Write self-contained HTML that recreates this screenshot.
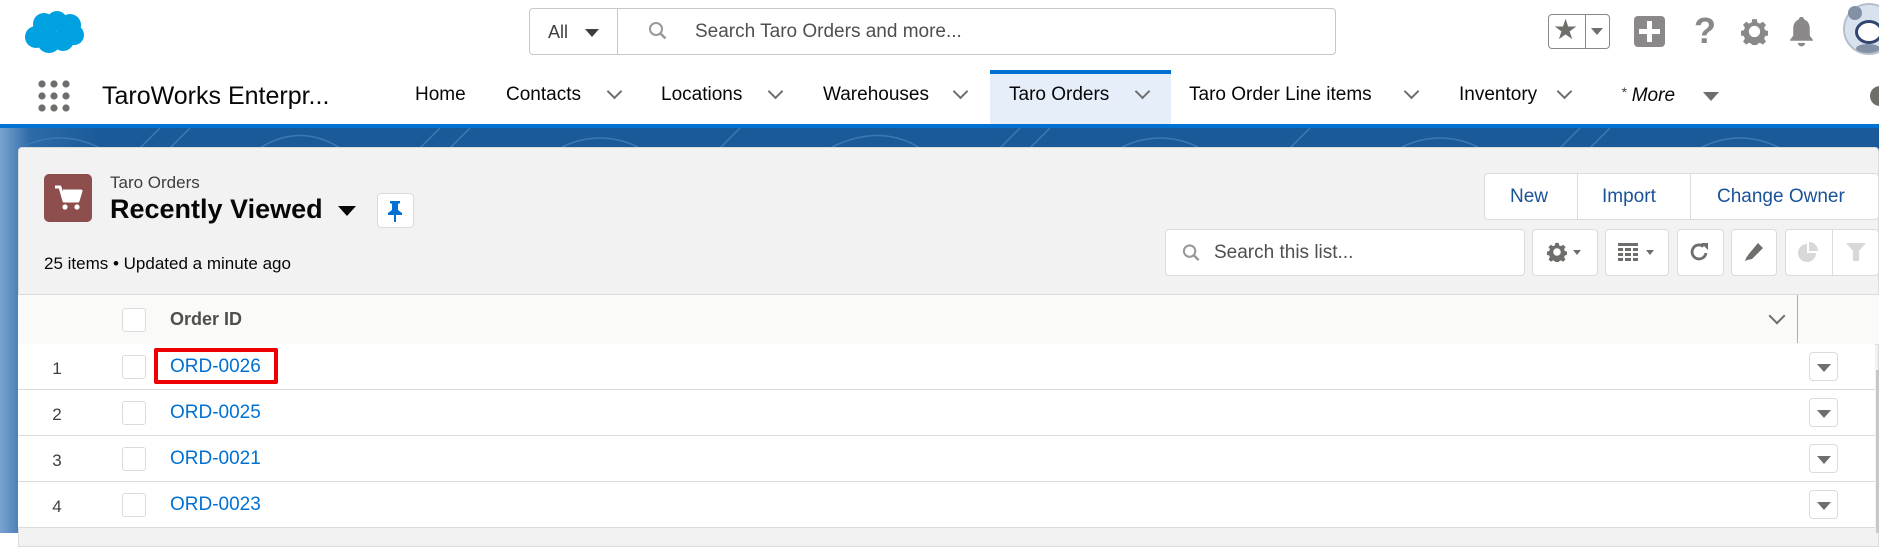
<!DOCTYPE html>
<html><head><meta charset="utf-8">
<style>
*{box-sizing:border-box;margin:0;padding:0}
body{width:1879px;height:533px;overflow:hidden;background:#fff;font-family:"Liberation Sans",sans-serif;position:relative;color:#080707}
.a{position:absolute}
.nav{font-size:19px;color:#080707;top:84px;white-space:nowrap}
.chev{position:absolute;width:11px;height:11px;border-right:2px solid #706e6b;border-bottom:2px solid #706e6b;transform:rotate(45deg)}
.tri{position:absolute;width:0;height:0;border-left:7px solid transparent;border-right:7px solid transparent;border-top:8px solid #3e3e3c}
.btn{position:absolute;background:#fff;border:1px solid #dddbda;border-radius:4px}
.row{position:absolute;left:18px;width:1857px;height:46px;background:#fff;border-bottom:1px solid #dddbda}
.cb{position:absolute;left:104px;top:11px;width:24px;height:24px;border:1px solid #dddbda;border-radius:3px;background:#fff}
.num{position:absolute;left:28px;width:22px;top:15px;font-size:17px;color:#3e3e3c;text-align:center}
.lnk{position:absolute;left:152px;top:12px;font-size:19px;color:#0070d2}
.dd{position:absolute;left:1791px;top:8px;width:29px;height:29px;border:1px solid #dddbda;border-radius:4px;background:#fff}
.dd:after{content:"";position:absolute;left:7px;top:11px;border-left:7px solid transparent;border-right:7px solid transparent;border-top:8px solid #706e6b}
</style></head><body>
<svg class="a" style="left:24px;top:10px" width="62" height="44" viewBox="0 0 62 44"><g fill="#00a1e0"><circle cx="20" cy="14" r="11"/><circle cx="33" cy="11" r="10"/><circle cx="46" cy="15" r="11"/><circle cx="50" cy="25" r="10"/><circle cx="12" cy="27" r="11"/><circle cx="25" cy="31" r="12"/><circle cx="39" cy="30" r="11"/></g></svg>
<div class="a" style="left:529px;top:8px;width:807px;height:47px;border:1px solid #c9c7c5;border-radius:4px;background:#fff"></div>
<div class="a" style="left:617px;top:9px;width:1px;height:45px;background:#c9c7c5"></div>
<div class="a" style="left:548px;top:22px;font-size:18px;color:#3e3e3c">All</div>
<div class="tri" style="left:585px;top:29px;border-top-color:#3e3e3c"></div>
<svg class="a" style="left:648px;top:21px" width="20" height="20" viewBox="0 0 20 20"><circle cx="8" cy="8" r="6" fill="none" stroke="#999" stroke-width="2"/><path d="M12.5 12.5l5 5" stroke="#999" stroke-width="2.5"/></svg>
<div class="a" style="left:695px;top:21px;font-size:19px;color:#514f4d">Search Taro Orders and more...</div>
<div class="a" style="left:1548px;top:14px;width:62px;height:35px;border:1px solid #888;border-radius:4px"></div>
<div class="a" style="left:1585px;top:14px;width:1px;height:35px;background:#888"></div>
<div class="a" style="left:1553px;top:13px;font-size:28px;color:#706e6b">★</div>
<div class="a" style="left:1591px;top:28px;border-left:6px solid transparent;border-right:6px solid transparent;border-top:7px solid #706e6b"></div>
<div class="a" style="left:1634px;top:16px;width:31px;height:31px;background:#8a8888;border-radius:4px"></div>
<div class="a" style="left:1647px;top:21px;width:5px;height:21px;background:#fff"></div>
<div class="a" style="left:1639px;top:29px;width:21px;height:5px;background:#fff"></div>
<div class="a" style="left:1694px;top:10px;font-size:36px;color:#8a8888;font-weight:bold">?</div>
<svg class="a" style="left:1741px;top:18px" width="27" height="27" viewBox="0 0 24 24"><path fill="#8a8888" d="M10 1h4l.6 3 2.2 1 2.6-1.7 2.8 2.8-1.7 2.6 1 2.2 3 .6v4l-3 .6-1 2.2 1.7 2.6-2.8 2.8-2.6-1.7-2.2 1-.6 3h-4l-.6-3-2.2-1-2.6 1.7-2.8-2.8 1.7-2.6-1-2.2-3-.6v-4l3-.6 1-2.2-1.7-2.6 2.8-2.8 2.6 1.7 2.2-1z"/><circle cx="12" cy="12" r="5" fill="#fff"/></svg>
<svg class="a" style="left:1788px;top:16px" width="27" height="31" viewBox="0 0 26 30"><path fill="#8a8888" d="M13 1c1.5 0 2.5 1 2.5 2.3C19 4.5 21 8 21 12v7l3 4v1H2v-1l3-4v-7c0-4 2-7.5 5.5-8.7C10.5 2 11.5 1 13 1zM9.5 26h7a3.5 3.5 0 01-7 0z"/></svg>
<div class="a" style="left:1843px;top:3px;width:52px;height:52px;border-radius:50%;background:#d8e2ee;border:2px solid #b5bfcc"></div>
<div class="a" style="left:1848px;top:6px;width:14px;height:14px;border-radius:50%;background:#8391a6"></div>
<div class="a" style="left:1855px;top:20px;width:28px;height:24px;border-radius:50%;background:#fff;border:3px solid #31456e"></div>
<div class="a" style="left:1856px;top:44px;width:24px;height:9px;border-radius:50%;background:#8391a6"></div>
<svg class="a" style="left:38px;top:80px" width="32" height="32" viewBox="0 0 32 32"><g fill="#706e6b"><circle cx="4" cy="4" r="3.6"/><circle cx="16" cy="4" r="3.6"/><circle cx="28" cy="4" r="3.6"/><circle cx="4" cy="16" r="3.6"/><circle cx="16" cy="16" r="3.6"/><circle cx="28" cy="16" r="3.6"/><circle cx="4" cy="28" r="3.6"/><circle cx="16" cy="28" r="3.6"/><circle cx="28" cy="28" r="3.6"/></g></svg>
<div class="a" style="left:102px;top:82px;font-size:25px;color:#080707">TaroWorks Enterpr...</div>
<div class="a" style="left:990px;top:70px;width:181px;height:54px;background:#e5eef9"></div>
<div class="a" style="left:990px;top:70px;width:181px;height:4px;background:#0070d2"></div>
<div class="a nav" style="left:415px">Home</div>
<div class="a nav" style="left:506px">Contacts</div><div class="chev" style="left:609px;top:86px"></div>
<div class="a nav" style="left:661px">Locations</div><div class="chev" style="left:770px;top:86px"></div>
<div class="a nav" style="left:823px">Warehouses</div><div class="chev" style="left:955px;top:86px"></div>
<div class="a nav" style="left:1009px">Taro Orders</div><div class="chev" style="left:1137px;top:86px"></div>
<div class="a nav" style="left:1189px">Taro Order Line items</div><div class="chev" style="left:1406px;top:86px"></div>
<div class="a nav" style="left:1459px">Inventory</div><div class="chev" style="left:1559px;top:86px"></div>
<div class="a nav" style="left:1621px;font-style:italic"><span style="font-size:14px;vertical-align:4px;color:#3e3e3c">*</span> More</div>
<div class="a" style="left:1703px;top:92px;border-left:8px solid transparent;border-right:8px solid transparent;border-top:9px solid #706e6b"></div>
<div class="a" style="left:1870px;top:86px;width:20px;height:20px;border-radius:50%;background:#706e6b"></div>
<div class="a" style="left:0;top:124px;width:1879px;height:4px;background:#0070d2"></div>
<div class="a" style="left:0;top:128px;width:1879px;height:405px;background:linear-gradient(90deg,#7aa3cf 0px,#2c6aa8 30px,#1b5a99 100px);"></div>
<svg class="a" style="left:0;top:128px" width="1879" height="20"><g stroke="#3d78b4" fill="none" stroke-width="1.5"><path d="M20 20 Q60 0 100 20 M140 20 L160 0 M170 20 L190 0 M260 20 Q300 -5 340 20 M420 20 L440 0 M450 20 L470 0 M560 20 Q600 0 640 20 M720 20 L740 0 M830 20 Q880 -5 920 20 M1000 20 L1020 0 M1030 20 L1050 0 M1120 20 Q1160 0 1200 20 M1290 20 L1310 0 M1400 20 Q1440 0 1480 20 M1560 20 L1580 0 M1590 20 L1610 0 M1700 20 Q1740 0 1780 20"/></g></svg>
<div class="a" style="left:18px;top:147px;width:1861px;height:400px;background:#f3f2f2;border-radius:4px 4px 0 0;border:1px solid #dddbda"></div>
<div class="a" style="left:44px;top:174px;width:48px;height:48px;background:#8f4e4e;border-radius:5px"></div>
<svg class="a" style="left:52px;top:182px" width="32" height="32" viewBox="0 0 32 32"><path d="M3 5h5l4 14h14l3-10H11" fill="none" stroke="#fff" stroke-width="3" stroke-linejoin="round"/><path fill="#fff" d="M10 9h19l-3 10H13z"/><circle cx="13" cy="25" r="2.6" fill="#fff"/><circle cx="25" cy="25" r="2.6" fill="#fff"/></svg>
<div class="a" style="left:110px;top:173px;font-size:17px;color:#3e3e3c">Taro Orders</div>
<div class="a" style="left:110px;top:194px;font-size:27px;font-weight:bold;color:#080707">Recently Viewed</div>
<div class="a" style="left:338px;top:206px;border-left:9px solid transparent;border-right:9px solid transparent;border-top:10px solid #080707"></div>
<div class="btn" style="left:377px;top:193px;width:37px;height:35px"></div>
<svg class="a" style="left:386px;top:200px" width="18" height="22" viewBox="0 0 18 22"><path fill="#0070d2" d="M4 1h10v2l-2 1v6l4 3v2H2v-2l4-3V4L4 3zM8 15h2v7H8z"/></svg>
<div class="a" style="left:44px;top:254px;font-size:17px;color:#080707">25 items • Updated a minute ago</div>
<div class="btn" style="left:1484px;top:173px;width:395px;height:47px"></div>
<div class="a" style="left:1577px;top:174px;width:1px;height:45px;background:#dddbda"></div>
<div class="a" style="left:1690px;top:174px;width:1px;height:45px;background:#dddbda"></div>
<div class="a" style="left:1510px;top:186px;font-size:19px;color:#1b5297">New</div>
<div class="a" style="left:1602px;top:186px;font-size:19px;color:#1b5297">Import</div>
<div class="a" style="left:1717px;top:186px;font-size:19px;color:#1b5297">Change Owner</div>
<div class="btn" style="left:1165px;top:229px;width:360px;height:47px"></div>
<svg class="a" style="left:1182px;top:243px" width="19" height="20" viewBox="0 0 20 20"><circle cx="8" cy="8" r="6" fill="none" stroke="#9a9896" stroke-width="2.2"/><path d="M12.5 12.5l5 5" stroke="#9a9896" stroke-width="2.5"/></svg>
<div class="a" style="left:1214px;top:242px;font-size:19px;color:#514f4d">Search this list...</div>
<div class="btn" style="left:1532px;top:229px;width:66px;height:47px"></div>
<svg class="a" style="left:1547px;top:242px" width="20" height="20" viewBox="0 0 24 24"><path fill="#706e6b" d="M10 1h4l.6 3 2.2 1 2.6-1.7 2.8 2.8-1.7 2.6 1 2.2 3 .6v4l-3 .6-1 2.2 1.7 2.6-2.8 2.8-2.6-1.7-2.2 1-.6 3h-4l-.6-3-2.2-1-2.6 1.7-2.8-2.8 1.7-2.6-1-2.2-3-.6v-4l3-.6 1-2.2-1.7-2.6 2.8-2.8 2.6 1.7 2.2-1z"/><circle cx="12" cy="12" r="4.5" fill="#fff"/></svg>
<div class="a" style="left:1573px;top:250px;border-left:4px solid transparent;border-right:4px solid transparent;border-top:5px solid #706e6b"></div>
<div class="btn" style="left:1605px;top:229px;width:64px;height:47px"></div>
<svg class="a" style="left:1618px;top:243px" width="20" height="20" viewBox="0 0 20 20"><g fill="#706e6b"><rect x="0" y="0" width="20" height="3"/><rect x="0" y="5" width="5" height="3"/><rect x="7" y="5" width="6" height="3"/><rect x="15" y="5" width="5" height="3"/><rect x="0" y="10" width="5" height="3"/><rect x="7" y="10" width="6" height="3"/><rect x="15" y="10" width="5" height="3"/><rect x="0" y="15" width="5" height="3"/><rect x="7" y="15" width="6" height="3"/><rect x="15" y="15" width="5" height="3"/></g></svg>
<div class="a" style="left:1646px;top:250px;border-left:4px solid transparent;border-right:4px solid transparent;border-top:5px solid #706e6b"></div>
<div class="btn" style="left:1677px;top:229px;width:47px;height:47px"></div>
<svg class="a" style="left:1690px;top:242px" width="20" height="20" viewBox="0 0 20 20"><path d="M16 11a7 7 0 1 1-2.5-6.5" fill="none" stroke="#706e6b" stroke-width="2.8"/><path fill="#706e6b" d="M11 1h7v7z"/></svg>
<div class="btn" style="left:1731px;top:229px;width:46px;height:47px"></div>
<svg class="a" style="left:1744px;top:242px" width="20" height="20" viewBox="0 0 20 20"><path fill="#706e6b" d="M14 1l5 5-11 11-5 1 1-5zM1 19l2-5 3 3z"/></svg>
<div class="btn" style="left:1785px;top:229px;width:94px;height:47px"></div>
<div class="a" style="left:1832px;top:230px;width:1px;height:45px;background:#dddbda"></div>
<svg class="a" style="left:1798px;top:242px" width="20" height="20" viewBox="0 0 20 20"><path fill="#d8d8d8" d="M9 2a9 9 0 1 0 9 9H9z"/><path fill="#d8d8d8" d="M11 0a9 9 0 0 1 9 9h-9z"/></svg>
<svg class="a" style="left:1846px;top:242px" width="20" height="20" viewBox="0 0 20 20"><path fill="#d8d8d8" d="M0 1h20l-7 8v10h-6V9z"/></svg>
<div class="a" style="left:18px;top:294px;width:1861px;height:51px;background:#fafaf9;border-top:1px solid #dddbda;border-bottom:1px solid #dddbda"></div>
<div class="cb" style="left:122px;top:308px"></div>
<div class="a" style="left:170px;top:309px;font-size:18px;font-weight:bold;color:#514f4d">Order ID</div>
<div class="chev" style="left:1771px;top:310px;width:12px;height:12px"></div>
<div class="a" style="left:1797px;top:295px;width:1px;height:48px;background:#b0adab"></div>
<div class="row" style="top:344px"><div class="num">1</div><div class="cb"></div><div class="lnk">ORD-0026</div><div class="dd"></div></div>
<div class="a" style="left:154px;top:348px;width:124px;height:36px;border:4px solid #ee0000;border-radius:2px"></div>
<div class="row" style="top:390px"><div class="num">2</div><div class="cb"></div><div class="lnk">ORD-0025</div><div class="dd"></div></div>
<div class="row" style="top:436px"><div class="num">3</div><div class="cb"></div><div class="lnk">ORD-0021</div><div class="dd"></div></div>
<div class="row" style="top:482px"><div class="num">4</div><div class="cb"></div><div class="lnk">ORD-0023</div><div class="dd"></div></div>
<div class="a" style="left:1876px;top:370px;width:3px;height:163px;background:#c9c7c5"></div>
</body></html>
